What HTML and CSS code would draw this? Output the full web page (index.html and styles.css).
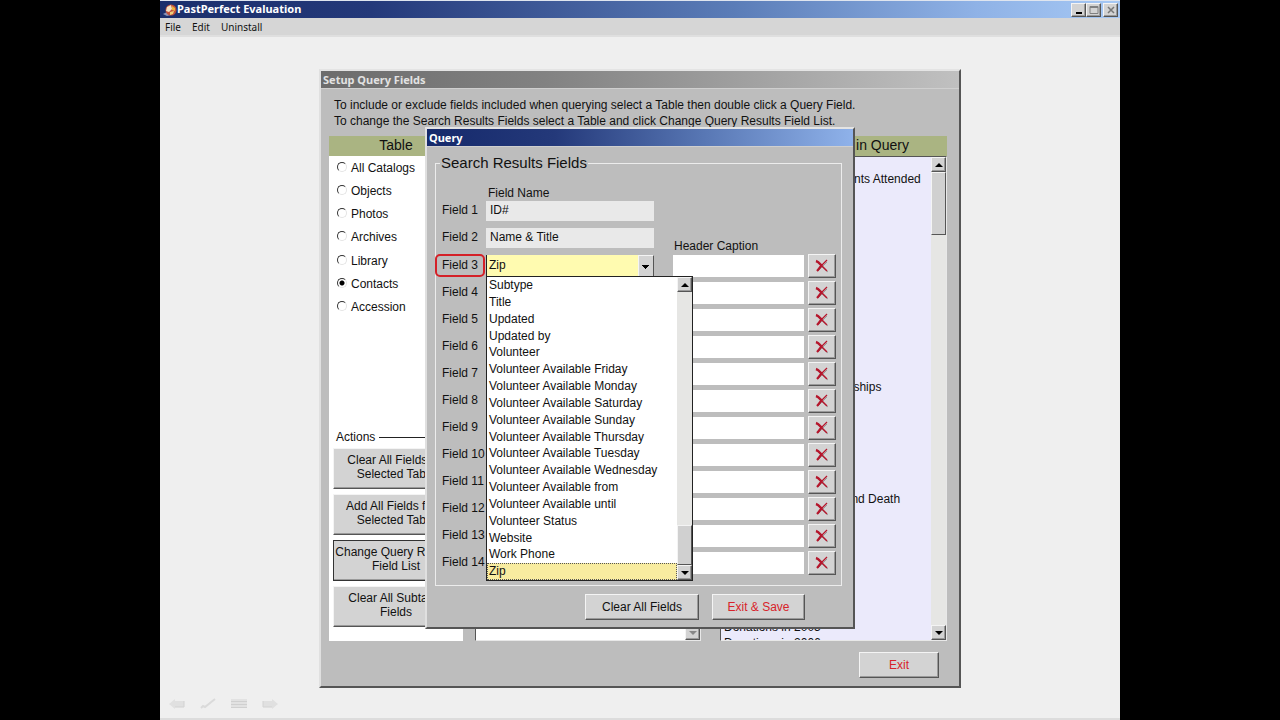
FILE: index.html
```html
<!DOCTYPE html>
<html lang="en">
<head>
    <meta charset="UTF-8">
    <title>PastPerfect Evaluation</title>
    <link rel="stylesheet" href="styles.css">
</head>
<body>
    <div class="app">
        <header class="app-title">
            <svg class="app-icon" viewBox="0 0 14 12" width="14" height="12">
                <path d="M0 10l4 2 4-1-4-3z" fill="#8a93b8"/>
                <circle cx="8" cy="6" r="5.5" fill="#c0503a"/>
                <path d="M4 3l4-2 1 4-3 3-3-1z" fill="#f3e3c4"/>
                <path d="M9 2l3 2v3l-3-1z" fill="#e8b33c"/>
                <path d="M7 8l4-1-1 3-3 1z" fill="#f0cf7a"/>
            </svg>
            <h1>PastPerfect Evaluation</h1>
            <div class="window-buttons">
                <button type="button" aria-label="Minimize"><svg viewBox="0 0 12 10" width="12" height="10"><path d="M3 8h6" stroke="#000" stroke-width="2"/></svg></button>
                <button type="button" aria-label="Maximize"><svg viewBox="0 0 12 10" width="12" height="10"><path d="M2 1.5h8v7H2zM2 2.5h8" stroke="#808080" fill="none"/></svg></button>
                <button type="button" aria-label="Close" class="close"><svg viewBox="0 0 12 10" width="12" height="10"><path d="M3 2l6 6M9 2L3 8" stroke="#777" stroke-width="1.5"/></svg></button>
            </div>
        </header>
        <nav class="menu">
            <a href="#">File</a>
            <a href="#">Edit</a>
            <a href="#">Uninstall</a>
        </nav>

        <main class="desktop">
            <section class="window setup">
                <h2 class="title-bar inactive">Setup Query Fields</h2>
                <div class="setup-body">
                    <p class="intro">To include or exclude fields included when querying select a Table then double click a Query Field.<br>To change the Search Results Fields select a Table and click Change Query Results Field List.</p>
                    <div class="columns">
                        <div class="column">
                            <h3>Table</h3>
                            <div class="panel">
                                <div class="tables">
                                    <label><input type="radio" name="table">All Catalogs</label>
                                    <label><input type="radio" name="table">Objects</label>
                                    <label><input type="radio" name="table">Photos</label>
                                    <label><input type="radio" name="table">Archives</label>
                                    <label><input type="radio" name="table">Library</label>
                                    <label><input type="radio" name="table" checked>Contacts</label>
                                    <label><input type="radio" name="table">Accession</label>
                                </div>
                                <div class="actions">
                                    <h4>Actions</h4>
                                    <button type="button">Clear All Fields for<br>Selected Table</button>
                                    <button type="button">Add All Fields from<br>Selected Table</button>
                                    <button type="button" class="current">Change Query Results<br>Field List</button>
                                    <button type="button">Clear All Subtable<br>Fields</button>
                                </div>
                            </div>
                        </div>
                        <div class="column">
                            <h3></h3>
                            <div class="list-box">
                                <ul></ul>
                                <div class="scrollbar">
                                    <button type="button" class="up" aria-label="Scroll up"></button>
                                    <button type="button" class="down off" aria-label="Scroll down" disabled></button>
                                </div>
                            </div>
                        </div>
                        <div class="column">
                            <h3>Fields Included in Query</h3>
                            <div class="list-box tinted">
                                <ul id="queryFields"></ul>
                                <div class="scrollbar">
                                    <button type="button" class="up" aria-label="Scroll up"></button>
                                    <div class="thumb"></div>
                                    <button type="button" class="down" aria-label="Scroll down"></button>
                                </div>
                            </div>
                        </div>
                    </div>
                    <div class="setup-buttons">
                        <button type="button" class="red">Exit</button>
                    </div>
                </div>
            </section>

            <section class="window query">
                <h2 class="title-bar">Query</h2>
                <form class="query-body">
                    <fieldset>
                        <legend>Search Results Fields</legend>
                        <div class="column-name">Field Name</div>
                        <div id="fieldRows"></div>
                    </fieldset>
                    <div class="query-buttons">
                        <button type="button">Clear All Fields</button>
                        <button type="button" class="red save">Exit &amp; Save</button>
                    </div>
                </form>
            </section>

            <footer class="slide-tools">
                <svg viewBox="0 0 16 14" width="16" height="14"><path d="M0 8l6-5v2h9v6H6v2z" fill="#e0e0e0"/><path d="M6 11h9V5" stroke="#d2d2d2" fill="none"/></svg>
                <svg viewBox="0 0 16 14" width="16" height="14"><path d="M1 12l2-2 2 1L15 3" stroke="#dadada" stroke-width="2" fill="none"/></svg>
                <svg viewBox="0 0 16 14" width="16" height="14"><path d="M0 3h16v9H0z" fill="#e2e2e2"/><path d="M0 5.5h16M0 8.5h16M0 11.5h16" stroke="#d0d0d0"/></svg>
                <svg viewBox="0 0 16 14" width="16" height="14"><path d="M16 8l-6-5v2H1v6h9v2z" fill="#e0e0e0"/><path d="M1 5v6h9" stroke="#d2d2d2" fill="none"/></svg>
            </footer>
        </main>
    </div>

    <script>
        const fieldCount = 14;
        const fixedFields = { 1: 'ID#', 2: 'Name & Title' };
        const openField = 3;
        const choices = [
            'Subtype', 'Title', 'Updated', 'Updated by', 'Volunteer',
            'Volunteer Available Friday', 'Volunteer Available Monday',
            'Volunteer Available Saturday', 'Volunteer Available Sunday',
            'Volunteer Available Thursday', 'Volunteer Available Tuesday',
            'Volunteer Available Wednesday', 'Volunteer Available from',
            'Volunteer Available until', 'Volunteer Status', 'Website',
            'Work Phone', 'Zip'
        ];
        // line number in the list -> field
        const queryFieldLines = 30;
        const queryFields = {
            1: 'Fundraisers Special Events Attended',
            14: 'Organizers and Relationships',
            21: 'Contact Dates of Birth and Death',
            29: 'Donations in 2005',
            30: 'Donations in 2006'
        };

        const popup = `
            <div class="popup">
                <ul role="listbox">
                    ${choices.map(c => `<li role="option"${c === 'Zip' ? ' class="selected"' : ''}>${c}</li>`).join('')}
                </ul>
                <div class="scrollbar">
                    <button type="button" class="up" aria-label="Scroll up"></button>
                    <div class="thumb"></div>
                    <button type="button" class="down" aria-label="Scroll down"></button>
                </div>
            </div>`;

        let rowsHTML = '';
        for (let n = 1; n <= fieldCount; n++) {
            const open = n === openField;
            let control;
            if (fixedFields[n]) {
                control = `<input type="text" id="field${n}" value="${fixedFields[n].replace('&', '&amp;')}" readonly>`;
            } else {
                control = `<select id="field${n}"><option>${open ? 'Zip' : ''}</option></select>`;
            }
            let caption = '';
            if (n === openField - 1) {
                caption = '<span class="caption-name">Header Caption</span>';
            } else if (!fixedFields[n]) {
                caption = `<input type="text" aria-label="Header caption ${n}">
                    <button type="button" class="delete" aria-label="Delete field ${n}">
                        <svg viewBox="0 0 14 14" width="14" height="14">
                            <path d="M2 3l5 5 6 5M12 3L8 7l-5 5" stroke="#9a9a9a" fill="none"/>
                            <path d="M1 2c3 1 4 3 6 5" stroke="#b5162c" stroke-width="2.4" fill="none"/>
                            <path d="M7 7l5 5" stroke="#b5162c" stroke-width="1.4" fill="none"/>
                            <path d="M12 1C9 4 8 5 7 6" stroke="#b5162c" stroke-width="1.2" fill="none"/>
                            <path d="M7 6c-2 2-3 4-5 6" stroke="#b5162c" stroke-width="2.2" fill="none"/>
                        </svg>
                    </button>`;
            }
            rowsHTML += `
                <div class="field-row${open ? ' open' : ''}">
                    <label for="field${n}">Field ${n}</label>
                    <div class="field-control">${control}${open ? popup : ''}</div>
                    ${caption}
                </div>`;
        }
        document.getElementById('fieldRows').innerHTML = rowsHTML;

        let linesHTML = '';
        for (let i = 1; i <= queryFieldLines; i++) {
            linesHTML += `<li>${queryFields[i] || ''}</li>`;
        }
        document.getElementById('queryFields').innerHTML = linesHTML;
    </script>
</body>
</html>
```
FILE: styles.css
```css
* {
    box-sizing: border-box;
}
body {
    margin: 0;
    background: #000;
    color: #111;
    font-family: "Liberation Sans", Arial, sans-serif;
    font-size: 12px;
    line-height: 14px;
}
h1, h2, h3, h4, p, ul {
    margin: 0;
    padding: 0;
    font-size: 12px;
    font-weight: normal;
}
ul {
    list-style: none;
}
button, input, select {
    font: inherit;
    color: inherit;
    margin: 0;
    padding: 0;
    border-radius: 0;
}
button {
    background: #d3d3d3;
    border: 1px solid;
    border-color: #f4f4f4 #555 #555 #f4f4f4;
    box-shadow: inset -1px -1px #9a9a9a;
}
.red {
    color: #d8232a;
}

/* application frame */
.app {
    display: flex;
    flex-direction: column;
    width: 75%;
    min-height: 100vh;
    margin: 0 auto;
    background: #efefef;
}
.app-title {
    display: flex;
    align-items: center;
    height: 18px;
    padding: 0 2px 0 3px;
    border-top: 1px solid #dfe5ef;
    background: linear-gradient(90deg, #1b2f6c 0%, #24397a 22%, #5b7db8 60%, #8fb2e6 85%, #a6c8f4 100%);
}
.app-title h1 {
    flex: 1;
    padding-bottom: 2px;
    color: #fff;
    font: bold 11px/14px "Noto Sans", sans-serif;
}
.window-buttons {
    display: flex;
}
.window-buttons button {
    display: flex;
    width: 15px;
    height: 14px;
    padding: 1px 0 0;
    justify-content: center;
}
.window-buttons .close {
    margin-left: 2px;
}
.menu {
    display: flex;
    gap: 11px;
    height: 19px;
    padding: 0 5px;
    background: #d6d6d6;
    border-bottom: 2px solid #dfdfdf;
}
.menu a {
    color: #111;
    text-decoration: none;
    font: 10px/18px "Noto Sans", sans-serif;
}
.desktop {
    position: relative;
    flex: 1;
    display: flex;
    flex-direction: column;
    padding-top: 32px;
    border-bottom: 2px solid #dcdcdc;
}

/* windows */
.window {
    background: #bdbdbd;
    border: 2px solid;
    border-color: #e4e4e4 #555 #555 #e0e0e0;
}
.title-bar {
    height: 18px;
    padding-left: 2px;
    color: #fff;
    font: bold 11px/17px "Noto Sans", sans-serif;
    background: linear-gradient(90deg, #15296b 0%, #24397a 30%, #5877b4 65%, #8fb2ea 100%);
    border-bottom: 1px solid #cfcfcf;
}
.title-bar.inactive {
    color: #e2e2e2;
    background: linear-gradient(90deg, #6c6c6c 0%, #828282 35%, #c0c0c0 100%);
}
.setup {
    width: 642px;
    margin: 0 auto;
}
.setup-body {
    padding: 8px 12px 8px 8px;
}
.intro {
    padding-left: 5px;
    line-height: 16px;
}
.columns {
    display: grid;
    grid-template-columns: 134px 1fr 227px;
    gap: 0 12px;
    margin-top: 7px;
}
.column {
    display: flex;
    flex-direction: column;
    min-width: 0;
}
.column:nth-child(2) {
    margin-right: 7px;
}
.column h3 {
    height: 20px;
    background: #aab482;
    font-size: 14px;
    line-height: 19px;
    text-align: center;
}
.panel {
    display: flex;
    flex-direction: column;
    justify-content: space-between;
    height: 485px;
    padding-bottom: 14px;
    background: #fff;
}
.tables {
    display: grid;
    grid-auto-rows: 1fr;
    height: 163px;
    padding-left: 8px;
}
.tables label {
    display: flex;
    align-items: center;
    gap: 4px;
}
.tables input {
    appearance: none;
    width: 10px;
    height: 10px;
    margin-bottom: 2px;
    border: 1px solid;
    border-color: #333 #e4e4e4 #e4e4e4 #333;
    border-radius: 50%;
    background: #fff;
}
.tables input:checked {
    background: radial-gradient(circle, #000 2px, #fff 3px);
}
.actions {
    display: grid;
    gap: 5px;
    padding: 0 4px;
}
.actions h4 {
    display: flex;
    align-items: center;
    gap: 4px;
    padding-left: 3px;
    margin-bottom: -1px;
}
.actions h4::after {
    content: "";
    flex: 1;
    height: 1px;
    background: #222;
}
.actions button {
    height: 41px;
    padding-bottom: 3px;
    white-space: nowrap;
}
.actions .current {
    border-color: #333;
}
.list-box {
    display: flex;
    height: 485px;
    overflow: hidden;
    background: #fff;
    border: 1px solid;
    border-color: #555 #e8e8e8 #e8e8e8 #555;
}
.list-box ul {
    flex: 1;
    min-width: 0;
    padding: 14px 0 0 3px;
    white-space: nowrap;
}
.list-box li {
    height: 16px;
    line-height: 16px;
}
.tinted {
    background: #ebeafb;
}
.setup-buttons {
    display: flex;
    justify-content: flex-end;
    padding: 11px 8px 0 0;
}
.setup-buttons button {
    width: 80px;
    height: 26px;
}

/* scrollbars */
.scrollbar {
    display: flex;
    flex: none;
    flex-direction: column;
    width: 15px;
    background: #e6e6e4;
}
.scrollbar button {
    display: flex;
    align-items: center;
    justify-content: center;
    height: 15px;
}
.scrollbar button::before {
    content: "";
    border: 4px solid transparent;
}
.scrollbar .up::before {
    border-top-width: 0;
    border-bottom-color: #000;
}
.scrollbar .down {
    margin-top: auto;
}
.scrollbar .down::before {
    border-bottom-width: 0;
    border-top-color: #000;
}
.scrollbar .off::before {
    border-top-color: #888;
}
.thumb {
    height: 63px;
    background: #d0d0d0;
    border: 1px solid;
    border-color: #f4f4f4 #555 #555 #f4f4f4;
}

/* query dialog */
.query {
    position: absolute;
    top: 90px;
    left: 0;
    right: 0;
    width: 430px;
    margin: 0 auto;
}
.query-body {
    padding: 6px 11px 7px 8px;
}
fieldset {
    margin: 0;
    padding: 14px 5px 12px 6px;
    border: 1px solid #ececec;
}
legend {
    margin-left: -2px;
    padding: 0 1px;
    font-size: 15px;
    line-height: 20px;
}
.column-name {
    padding-left: 46px;
    line-height: 13px;
}
#fieldRows {
    display: grid;
    gap: 5px;
}
.field-row {
    display: grid;
    grid-template-columns: 44px 168px 1fr 28px;
    align-items: center;
    height: 22px;
}
.field-row > label {
    position: relative;
    padding-bottom: 2px;
    white-space: nowrap;
}
.field-row.open > label::after {
    content: "";
    position: absolute;
    inset: -4px 1px -3px -7px;
    border: 2px solid #d42027;
    border-radius: 5px;
}
.field-control {
    position: relative;
    display: flex;
}
.field-row input {
    min-width: 0;
    height: 22px;
    background: #fff;
    border: 0;
}
.field-control input {
    width: 100%;
    height: 20px;
    padding: 0 4px 3px;
    background: #e9e9e9;
}
.field-control select {
    appearance: none;
    width: 100%;
    height: 22px;
    padding: 0 0 2px 3px;
    border: 0;
    background: #fff;
}
.open .field-control select {
    background: #fffbb0;
    border-left: 1px solid #222;
    padding-left: 2px;
}
.open .field-control::after {
    content: "";
    position: absolute;
    top: 0;
    right: 0;
    width: 14px;
    height: 22px;
    border: 1px solid;
    border-color: #f4f4f4 #555 #555 #f4f4f4;
    background: linear-gradient(#000, #000) 3px 9px / 7px 1px no-repeat,
        linear-gradient(#000, #000) 4px 10px / 5px 1px no-repeat,
        linear-gradient(#000, #000) 5px 11px / 3px 1px no-repeat,
        linear-gradient(#000, #000) 6px 12px / 1px 1px no-repeat,
        #d3d3d3;
}
.field-row > input {
    margin: 0 4px 0 19px;
}
.caption-name {
    align-self: end;
    margin: 0 0 -4px 20px;
    white-space: nowrap;
}
.delete {
    display: flex;
    align-items: center;
    justify-content: center;
    height: 24px;
}
.popup {
    position: absolute;
    z-index: 1;
    top: 21px;
    left: 0;
    display: flex;
    width: 207px;
    border: 1px solid #222;
    background: #fff;
}
.popup ul {
    flex: 1;
    display: grid;
    grid-auto-rows: 1fr;
    height: 303px;
}
.popup li {
    padding-left: 2px;
    line-height: 16px;
}
.popup .selected {
    background: #f8eca0;
    outline: 1px dotted #555;
    outline-offset: -1px;
}
.popup .thumb {
    height: 40px;
    margin-top: auto;
}
.popup .scrollbar .down {
    margin-top: 0;
}
.query-buttons {
    display: flex;
    justify-content: flex-end;
    gap: 13px;
    padding: 8px 37px 0 0;
}
.query-buttons button {
    width: 114px;
    height: 26px;
}
.query-buttons .save {
    width: 93px;
}

/* presentation controls */
.slide-tools {
    display: flex;
    gap: 15px;
    padding: 8px 0 0 9px;
}
```
